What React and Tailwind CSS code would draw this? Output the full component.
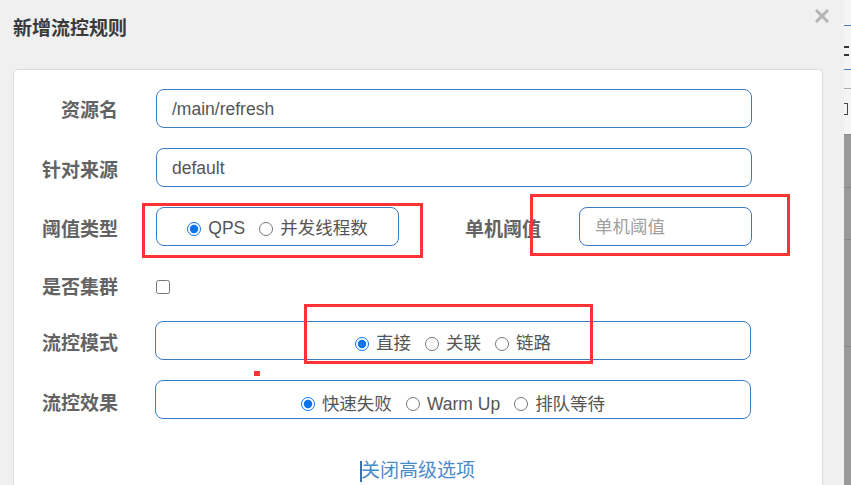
const font = "font-['Liberation_Sans','Noto_Sans_CJK_SC',sans-serif]";

function Label({ children, className = "w-[104px]" }) {
  return (
    <div className={`shrink-0 text-right text-[19px] font-bold leading-none text-[#636363] ${className}`}>
      {children}
    </div>
  );
}

function Radio({ label, checked }) {
  return (
    <label className="flex items-center gap-[7px]">
      <input
        type="radio"
        name={label}
        defaultChecked={checked}
        className="m-0 h-[14px] w-[14px] accent-[#0a74f0]"
      />
      <span>{label}</span>
    </label>
  );
}

function RadioBox({ options, className = "" }) {
  return (
    <div
      className={`flex h-[39px] items-center justify-center gap-[14px] rounded-lg border border-[#3a7cc2] text-[17.5px] text-[#555] ${className}`}
    >
      {options.map((o, i) => (
        <Radio key={o} label={o} checked={i === 0} />
      ))}
    </div>
  );
}

function TextBox({ value, placeholder, className = "" }) {
  return (
    <div
      className={`flex h-[39px] items-center rounded-lg border border-[#3a7cc2] px-[15px] pt-[2px] text-[17.5px] ${className}`}
    >
      {value ? (
        <span className="text-[#555]">{value}</span>
      ) : (
        <span className="text-[#a0a0a0]">{placeholder}</span>
      )}
    </div>
  );
}

export default function App() {
  return (
    <div className={`relative flex h-[485px] w-[851px] overflow-hidden ${font}`}>
      <div className="flex w-[844px] shrink-0 flex-col bg-[#f0f0f0]">
        <header className="relative h-[69px] shrink-0 pl-[13px] pt-[17px]">
          <h1 className="text-[19px] font-bold leading-[24px] text-[#3a3a3a]">新增流控规则</h1>
          <svg
            className="absolute left-[815px] top-[9px]"
            width="14"
            height="14"
            viewBox="0 0 14 14"
          >
            <path d="M2 2L12 12M12 2L2 12" stroke="#b4b4b4" strokeWidth="3" strokeLinecap="square" />
          </svg>
        </header>

        <div className="ml-[13px] flex w-[810px] flex-1 flex-col rounded-t-[5px] border border-b-0 border-[#dcdcdc] bg-white pt-[19px]">
          <div className="flex items-center gap-[38px]">
            <Label className="w-[104px] mt-[4px]">资源名</Label>
            <TextBox value="/main/refresh" className="w-[596px]" />
          </div>

          <div className="mt-[20px] flex items-center gap-[38px]">
            <Label className="w-[104px] mt-[5px]">针对来源</Label>
            <TextBox value="default" className="w-[596px]" />
          </div>

          <div className="mt-[20px] flex items-center">
            <Label className="w-[104px] mt-[5px]">阈值类型</Label>
            <RadioBox options={["QPS", "并发线程数"]} className="ml-[38px] w-[243px] pt-[4px]" />
            <Label className="ml-[64px] w-[78px] mt-[5px] whitespace-nowrap">单机阈值</Label>
            <TextBox placeholder="单机阈值" className="ml-[38px] w-[173px]" />
          </div>

          <div className="mt-[20px] flex h-[35px] items-center gap-[38px] pt-[6px]">
            <Label className="w-[104px] mt-[2px]">是否集群</Label>
            <input type="checkbox" className="m-0 h-[14px] w-[14px]" />
          </div>

          <div className="mt-[20px] flex items-center gap-[37px]">
            <Label className="w-[104px] mt-[6px]">流控模式</Label>
            <RadioBox options={["直接", "关联", "链路"]} className="w-[596px] pt-[6px]" />
          </div>

          <div className="mt-[20px] flex items-center gap-[37px]">
            <Label className="w-[104px] mt-[7px]">流控效果</Label>
            <RadioBox options={["快速失败", "Warm Up", "排队等待"]} className="w-[596px] pt-[9px]" />
          </div>

          <div className="mt-[40px] flex justify-center">
            <a className="relative cursor-pointer text-[19px] leading-[24px] text-[#4a8bcc]">
              <span className="absolute left-[-1px] top-[2px] h-[21px] w-[2px] bg-[#3a72b0]" />
              关闭高级选项
            </a>
          </div>
        </div>
      </div>

      <div className="flex w-[7px] flex-col overflow-hidden bg-[#999]">
        <div className="h-[135px] shrink-0 border-b border-[#888] bg-[#f4f4f4]">
          <div className="mt-[25px] h-px bg-[#4a7cb0]" />
          <div className="mt-[20px] h-[10px] w-[5px] border-t-2 border-b-2 border-[#333]" />
          <div className="mt-[13px] h-px bg-[#4a7cb0]" />
          <div className="mt-[18px] h-px bg-[#aaa]" />
          <div className="mt-[14px] h-[12px] w-[4px] border-y border-r border-[#444]" />
        </div>
        <div className="mt-[52px] h-px bg-[#888]" />
        <div className="mt-[51px] h-px bg-[#888]" />
        <div className="mt-[106px] h-px bg-[#888]" />
      </div>

      <div className="pointer-events-none absolute left-[142px] top-[203px] h-[55px] w-[281px] border-[3px] border-[#f33]" />
      <div className="pointer-events-none absolute left-[530px] top-[194px] h-[62px] w-[260px] border-[3px] border-[#f33]" />
      <div className="pointer-events-none absolute left-[304px] top-[304px] h-[60px] w-[289px] border-[3px] border-[#f33]" />
      <div className="pointer-events-none absolute left-[254px] top-[371px] h-[5px] w-[6px] bg-[#f33]" />
    </div>
  );
}
